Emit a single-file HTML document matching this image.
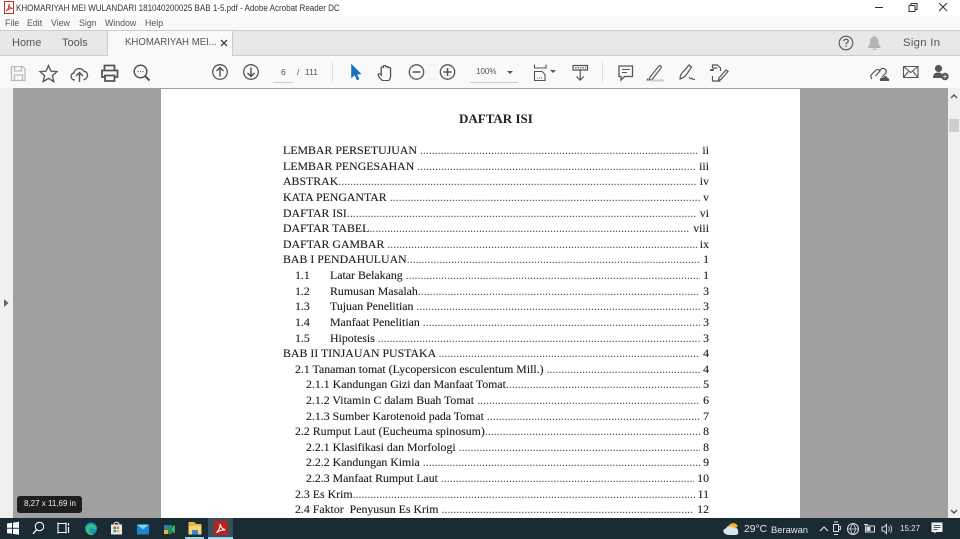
<!DOCTYPE html>
<html><head><meta charset="utf-8"><style>
*{box-sizing:border-box}
html,body{margin:0;padding:0;width:960px;height:539px;overflow:hidden;background:#fff;font-family:"Liberation Sans",sans-serif}
.a{position:absolute}
.t{position:absolute;white-space:nowrap;color:#444}
.l{position:absolute;left:283px;width:426px;height:16px;display:flex;font:11.85px/16px "Liberation Serif",serif;color:#1c1c1c;white-space:pre;filter:blur(.25px);-webkit-text-stroke:.12px #222}
.l b{font-weight:normal}
.l i{font-style:normal;flex:1;overflow:hidden;margin:0 3px 0 0;color:#444;-webkit-text-stroke:0}
.l u{text-decoration:none;display:inline-block;width:35px}
svg{position:absolute;overflow:visible}
</style></head><body>
<div class="a" style="left:0;top:0;width:960px;height:16px;background:#fff"></div>
<div class="a" style="left:0;top:16px;width:960px;height:14px;background:#f9f9f9"></div>
<div class="a" style="left:0;top:30px;width:960px;height:26px;background:#e8e8e8;border-top:1px solid #ccc;border-bottom:1px solid #ccc"></div>
<div class="a" style="left:107px;top:30px;width:126px;height:27px;background:#f9f9f9;border-right:1px solid #ccc;border-left:1px solid #ccc;border-top:1px solid #ccc"></div>
<div class="a" style="left:0;top:56px;width:960px;height:32px;background:#f9f9f9"></div>

<svg style="left:3px;top:1px" width="12" height="13" viewBox="0 0 12 13"><path d="M1.5 .5h9v12h-9z" fill="#fff" stroke="#c8302c"/><path d="M3 10c2-1 3-4 3-7 0 3 1 4 3.500 4.500C7 7.500 4.500 8.500 3 10z" fill="none" stroke="#c8302c"/></svg>
<div class="t" style="left:16px;top:2px;font-size:9px;line-height:12px;color:#333;transform:scaleX(.893);transform-origin:left">KHOMARIYAH MEI WULANDARI 181040200025 BAB 1-5.pdf - Adobe Acrobat Reader DC</div>
<div class="t" style="left:5px;top:17px;font-size:8.800px;line-height:12px;color:#555">File</div>
<div class="t" style="left:27px;top:17px;font-size:8.800px;line-height:12px;color:#555">Edit</div>
<div class="t" style="left:51px;top:17px;font-size:8.800px;line-height:12px;color:#555">View</div>
<div class="t" style="left:79px;top:17px;font-size:8.800px;line-height:12px;color:#555">Sign</div>
<div class="t" style="left:105px;top:17px;font-size:8.800px;line-height:12px;color:#555">Window</div>
<div class="t" style="left:145px;top:17px;font-size:8.800px;line-height:12px;color:#555">Help</div>

<svg style="left:875px;top:3px" width="75" height="10" fill="none" stroke="#333"><path d="M0 4.500h8"/><path d="M34 2.500h6v6h-6zM36 2.500v-2h6v6h-2" stroke-width="1"/><path d="M64 0l8 8M72 0l-8 8"/></svg>

<div class="t" style="left:12px;top:36px;font-size:11px;line-height:14px;color:#555">Home</div>
<div class="t" style="left:62px;top:36px;font-size:11px;line-height:14px;color:#555">Tools</div>
<div class="t" style="left:125px;top:36px;font-size:10.300px;line-height:14px;color:#555;transform:scaleX(.935);transform-origin:left">KHOMARIYAH MEI...</div>
<svg style="left:221px;top:40px" width="6" height="6" stroke="#444" stroke-width="1.400"><path d="M0 0l6 6M6 0l-6 6"/></svg>

<svg style="left:838px;top:35px" width="16" height="16" fill="none" stroke="#555"><circle cx="8" cy="8" r="6.800" stroke-width="1.100"/><path d="M5.800 6.200c.2-2.700 4.400-2.700 4.400 0 0 1.600-2.200 1.500-2.200 3.200" stroke-width="1.200"/><path d="M8 10.600v1.300" stroke-width="1.200"/></svg>
<svg style="left:868px;top:36px" width="13" height="14" fill="#b4b4b4"><path d="M6.500 0c1 0 1.200.6 1.200 1C10 1.800 10.500 4 10.500 6c0 2.500 1 3.500 2 4.500V12H0v-1.500c1-1 2-2 2-4.500 0-2 .5-4.200 2.800-5 0-.4.700-1 1.700-1z"/><path d="M5 12.500h3V14H5z"/></svg>
<div class="t" style="left:903px;top:36px;font-size:11.300px;line-height:14px;font-weight:500;color:#555;letter-spacing:.3px">Sign In</div>

<svg style="left:0;top:56px" width="960" height="32" fill="none" stroke="#555" stroke-width="1.300">
<g stroke="#bbb"><path d="M11.500 10.500h11l2.500 2.500v11.500h-13.500z"/><path d="M14.500 10.500v4.500h7v-4.500M14.500 24.500v-5.500h8v5.500"/></g>
<path d="M48.500 9.500l2.400 5.600 6.100.5-4.600 4 1.400 6-5.300-3.200-5.300 3.200 1.400-6-4.600-4 6.100-.5z"/>
<path d="M75 24c-5 0-5-6.500-1-7 .5-5 8-6 10-1.500 4-.5 5.500 6.500-.5 8.500M79.500 26v-9M76 20l3.500-3.500 3.500 3.500" stroke-width="1.400"/>
<g stroke="#555" stroke-width="1.800"><path d="M104.500 14.500v-5h10v5M104.500 21h-2.500v-6.500h15.500V21h-2.500"/><path d="M105 19.500h9.500v5.500H105z"/></g>
<circle cx="140.500" cy="15.500" r="6.300" stroke-width="1.500"/><path d="M145 20l4.500 4.500" stroke-width="2"/><path d="M137.500 15.500h1M140 15.500h1M142.500 15.500h1"/>
<circle cx="220" cy="16" r="7.300"/><path d="M220 20.500v-9M216.500 15l3.500-3.500 3.500 3.500" stroke-width="1.500"/>
<circle cx="251" cy="16" r="7.300"/><path d="M251 11.500v9M247.500 17l3.500 3.500 3.500-3.500" stroke-width="1.500"/>
<path d="M273 26.500h20" stroke="#ccc" stroke-width="1"/>
<path d="M332.500 6v20M602.500 6v20" stroke="#ddd" stroke-width="1"/>
<path d="M351.500 8.500l9.500 9.500h-4l2 5-2 1-2-5.200-3.500 2.700z" fill="#1b6fc2" stroke="#1b6fc2" stroke-width=".6"/>
<path transform="matrix(1.2 0 0 1 -76 0)" d="M382 24.500c-2-2-3.500-4.500-3.500-6 0-1 1.500-1 2.500.5v-7c0-1.400 1.800-1.400 1.800 0v-1.500c0-1.400 2-1.400 2 0v1c0-1.400 2-1.400 2 0v1c0-1.400 2-1.400 2 0v8c0 2-1 3-1.500 4z" stroke-width="1.100"/>
<circle cx="416.500" cy="16" r="7.200"/><path d="M412.500 16h8" stroke-width="1.500"/>
<circle cx="447.500" cy="16" r="7.200"/><path d="M443.500 16h8M447.500 12v8" stroke-width="1.500"/>
<path d="M470 26.500h48" stroke="#ccc" stroke-width="1"/>
<path d="M534.500 8.500v3.500h11.500v-3.500" stroke-width="1.100"/><path d="M534.500 25v-9.500h7.500l3 3v6.500M534.500 24.500h11" stroke-width="1.100"/><path d="M537 22h6" stroke-dasharray="1 1" stroke-width="1"/>
<path d="M573 9.500h14.500v4.500H573zM580.200 14v10M576.500 20.500l3.700 3.700 3.700-3.700" stroke-width="1.200"/><path d="M575 11.800h11" stroke-dasharray="1.500 1" stroke-width="1.100"/>
<path d="M619 10h13.500v10.500h-8L621 24v-3.500h-2z" stroke-width="1.300"/><path d="M622 13.500h8M622 16.500h5" stroke-width="1"/>
<path d="M650 21l9-11c1-1 3 .5 2 2l-8.500 11-3.500 1z" stroke-width="1.100"/><path d="M648 22.500l-1 2" stroke-width="1.200"/><path d="M650 24.500h14" stroke="#ccc" stroke-width="2"/>
<path d="M680 23c0-4 2-7 4-8l5-6 2.500 2-4 6c-1 2-4 5-7.500 6z" stroke-width="1.200"/><path d="M689 21c2 2 1 3 3 1 1 2 1 2 3 1" stroke-width="1"/>
<path d="M712.500 12v-3h5l3 3v3M712.500 12h5M712.500 20v5h8" stroke-width="1.200"/><path d="M719 22l7-8 2 1.500-7 8-2.500.8z" stroke-width="1.200"/><path d="M710 14h4" stroke-width="1.800"/>
<path d="M872 23c-2-2-1-4 0-5l4-4c2-1 3.500 0 4 1l-4.500 5M880 14c2-2 4-2 5.500-.5 1 1.500 1 3-.5 4.500l-3 3" stroke-width="1.200"/><path d="M880 25c-1-3 2-4 3-3 1-3 4-2 4.500 0 1.500 0 2 1.500 1.500 3z" fill="#555" stroke="none"/>
<path d="M903.500 10.500h14.500v11h-14.500zM903.500 10.500l7.250 6 7.250-6M903.500 21.500l5-6M918 21.500l-5-6" stroke-width="1.100"/>
<circle cx="938.500" cy="12.500" r="3.600" fill="#555" stroke="none"/><path d="M933 22c0-4 2-5.500 5.500-5.500S942 18 942 22z" fill="#555" stroke="none"/><circle cx="945" cy="20.500" r="3.700" fill="#555" stroke="none"/><path d="M943 20.500h4M945 18.500v4" stroke="#eee" stroke-width=".8"/>
</svg>

<div class="t" style="left:281px;top:66px;font-size:8.500px;line-height:12px;color:#555">6</div>
<div class="t" style="left:297px;top:66px;font-size:8.500px;line-height:12px;color:#555">/</div>
<div class="t" style="left:305px;top:66px;font-size:8.500px;line-height:12px;color:#555">111</div>
<div class="t" style="left:476px;top:66px;font-size:8px;line-height:12px;color:#555">100%</div>
<svg style="left:507px;top:71px" width="6" height="4" fill="#555"><path d="M0 0h6L3 3z"/></svg>
<svg style="left:550px;top:70px" width="6" height="4" fill="#555"><path d="M0 0h6L3 3z"/></svg>

<!-- document area -->
<div class="a" style="left:0;top:88px;width:13px;height:430px;background:#f0f0f0"></div>
<svg style="left:4px;top:299px" width="5" height="8" fill="#666"><path d="M0 0l4.500 4L0 8z"/></svg>
<div class="a" style="left:13px;top:88px;width:935px;height:430px;background:#a0a0a0"></div>
<div class="a" style="left:161px;top:89px;width:639px;height:429px;background:#fff"></div>
<div class="a" style="left:948px;top:88px;width:12px;height:430px;background:#f0f0f0"></div>
<div class="a" style="left:949px;top:119px;width:10px;height:13px;background:#cdcdcd"></div>
<svg style="left:951px;top:94px" width="6" height="4" fill="none" stroke="#555" stroke-width="1.400"><path d="M0 4l3-3 3 3"/></svg>
<svg style="left:951px;top:510px" width="6" height="4" fill="none" stroke="#555" stroke-width="1.400"><path d="M0 0l3 3 3-3"/></svg>

<div class="t" style="left:459px;top:111px;font:bold 13px/16px 'Liberation Serif',serif;color:#222">DAFTAR ISI</div>

<div class="l" style="top:142px"><b>LEMBAR PERSETUJUAN </b><i>............................................................................................................................</i><b>ii</b></div>
<div class="l" style="top:157.600px"><b>LEMBAR PENGESAHAN </b><i>............................................................................................................................</i><b>iii</b></div>
<div class="l" style="top:173.200px"><b>ABSTRAK</b><i>....................................................................................................................................</i><b>iv</b></div>
<div class="l" style="top:188.900px"><b>KATA PENGANTAR </b><i>............................................................................................................................</i><b>v</b></div>
<div class="l" style="top:204.500px"><b>DAFTAR ISI</b><i>....................................................................................................................................</i><b>vi</b></div>
<div class="l" style="top:220.100px"><b>DAFTAR TABEL</b><i>....................................................................................................................................</i><b>viii</b></div>
<div class="l" style="top:235.700px"><b>DAFTAR GAMBAR </b><i>............................................................................................................................</i><b>ix</b></div>
<div class="l" style="top:251.300px"><b>BAB I PENDAHULUAN</b><i>....................................................................................................................................</i><b>1</b></div>
<div class="l" style="top:267px;left:295px;width:414px"><b><u>1.1</u>Latar Belakang </b><i>....................................................................................................................................</i><b>1</b></div>
<div class="l" style="top:282.600px;left:295px;width:414px"><b><u>1.2</u>Rumusan Masalah</b><i>....................................................................................................................................</i><b>3</b></div>
<div class="l" style="top:298.200px;left:295px;width:414px"><b><u>1.3</u>Tujuan Penelitian </b><i>....................................................................................................................................</i><b>3</b></div>
<div class="l" style="top:313.800px;left:295px;width:414px"><b><u>1.4</u>Manfaat Penelitian </b><i>....................................................................................................................................</i><b>3</b></div>
<div class="l" style="top:329.500px;left:295px;width:414px"><b><u>1.5</u>Hipotesis </b><i>....................................................................................................................................</i><b>3</b></div>
<div class="l" style="top:345.100px"><b>BAB II TINJAUAN PUSTAKA </b><i>....................................................................................................................................</i><b>4</b></div>
<div class="l" style="top:360.700px;left:295px;width:414px"><b>2.1 Tanaman tomat (Lycopersicon esculentum Mill.) </b><i>....................................................................................................................................</i><b>4</b></div>
<div class="l" style="top:376.300px;left:306px;width:403px"><b>2.1.1 Kandungan Gizi dan Manfaat Tomat</b><i>....................................................................................................................................</i><b>5</b></div>
<div class="l" style="top:391.900px;left:306px;width:403px"><b>2.1.2 Vitamin C dalam Buah Tomat </b><i>....................................................................................................................................</i><b>6</b></div>
<div class="l" style="top:407.600px;left:306px;width:403px"><b>2.1.3 Sumber Karotenoid pada Tomat </b><i>....................................................................................................................................</i><b>7</b></div>
<div class="l" style="top:423.200px;left:295px;width:414px"><b>2.2 Rumput Laut (Eucheuma spinosum)</b><i>....................................................................................................................................</i><b>8</b></div>
<div class="l" style="top:438.800px;left:306px;width:403px"><b>2.2.1 Klasifikasi dan Morfologi </b><i>....................................................................................................................................</i><b>8</b></div>
<div class="l" style="top:454.400px;left:306px;width:403px"><b>2.2.2 Kandungan Kimia </b><i>....................................................................................................................................</i><b>9</b></div>
<div class="l" style="top:470px;left:306px;width:403px"><b>2.2.3 Manfaat Rumput Laut </b><i>....................................................................................................................................</i><b>10</b></div>
<div class="l" style="top:485.700px;left:295px;width:414px"><b>2.3 Es Krim</b><i>....................................................................................................................................</i><b>11</b></div>
<div class="l" style="top:501.300px;left:295px;width:414px"><b>2.4 Faktor  Penyusun Es Krim </b><i>....................................................................................................................................</i><b>12</b></div>

<div class="a" style="left:17px;top:496px;width:65px;height:17px;background:#1e1e1e;border-radius:3px"></div>
<div class="t" style="left:24px;top:498px;font-size:8px;line-height:12px;color:#eee">8,27 x 11,69 in</div>

<!-- taskbar -->
<div class="a" style="left:0;top:518px;width:960px;height:21px;background:#1a2b34"></div>
<div class="a" style="left:208px;top:518px;width:25px;height:21px;background:#3d4d56"></div>
<div class="a" style="left:185px;top:537px;width:19px;height:2px;background:#9ad0f0"></div>
<div class="a" style="left:208px;top:537px;width:25px;height:2px;background:#9ad0f0"></div>
<svg style="left:0;top:518px" width="960" height="21" fill="none">
<path d="M7 5.500l5-.7v5H7zM13 4.700l6-.9v6h-6zM7 10.800h5v5l-5-.7zM13 10.800h6v6l-6-.9z" fill="#fff"/>
<circle cx="39.500" cy="8.500" r="4.200" stroke="#fff" stroke-width="1.100"/><path d="M36.500 11.800l-3.500 4" stroke="#fff" stroke-width="1.300"/>
<path d="M58 5.500h8v9h-8zM58 5.500v-1M66 4.500v1M58 14.500v1M66 14.500v1" stroke="#fff" stroke-width="1.100"/><path d="M68.500 5v2.500M68.500 9v6" stroke="#fff" stroke-width="1.200"/>
<circle cx="91" cy="10.500" r="6" fill="#1b8fc8"/><path d="M86 10c1-4 8-5 10.500-.5.500 2-3 2.500-4 1.500 0-2-3-2-3 1 0 3 3 4.500 5 4-3 2.500-9 1-8.500-6z" fill="#35c27c"/>
<path d="M111 6.500h11v10h-11z" fill="#e8e8e8"/><path d="M114 6.500c0-3 5-3 5 0" stroke="#e8e8e8"/><path d="M113.500 8.500h2.500v2.500h-2.500z" fill="#e0452b"/><path d="M116.800 8.500h2.500v2.500h-2.500z" fill="#7db93b"/><path d="M113.500 11.800h2.500v2.500h-2.500z" fill="#2c9be0"/><path d="M116.800 11.800h2.500v2.500h-2.500z" fill="#f2b81c"/>
<path d="M137 6.500h12v10h-12z" fill="#1b86d0"/><path d="M137 6.500l6 5 6-5z" fill="#7fd0f5"/>
<path d="M164 7h8v9h-8z" fill="#2b8a5a"/><path d="M164 7h4v4h-4z" fill="#2e7ed0"/><path d="M164 12h4v4h-4z" fill="#e6b52c"/><path d="M172 9l3-2v8.500l-3-2z" fill="#3ab36b"/>
<path d="M188.500 4h6l1.500 2h5.500v10.500h-13z" fill="#e8b93c"/><path d="M188.500 8h13v8.500h-13z" fill="#f4d576"/><path d="M192 12h6v4.500h-6z" fill="#3b87c4"/>
<rect x="214.500" y="3" width="13" height="14" fill="#c1201b"/><path d="M216.500 14.500c2.500-2 3.500-5 3.800-8.500.2 3 1.500 5 5 5.800-3.500 0-6.500 1-8.800 2.700z" stroke="#fff" stroke-width="1.100"/>
<path d="M730 17c-8 0-8-6-4-6.500 1-3 5-4 7-2 3 0 5.500 3 5 5 1 2-1 3.500-2 3.500z" fill="#dbe6f0"/><path d="M728 9a5.500 5.500 0 0 1 10-1c-1.500 1-2 2-2.500 3-1.500-1.500-4-3-7.500-2z" fill="#f5b324"/>
<path d="M820 13l4-4 4 4" stroke="#eee" stroke-width="1"/>
<rect x="833.500" y="6.500" width="5" height="7" stroke="#ddd"/><path d="M834 4h4M834 16.500h4M838.500 8.500h2v3h-2" stroke="#ddd" stroke-width=".9"/>
<circle cx="853" cy="11" r="5.500" stroke="#ddd"/><path d="M847.500 11h11M853 5.500c-3 3.500-3 7.500 0 11M853 5.500c3 3.500 3 7.500 0 11" stroke="#ddd" stroke-width=".8"/>
<path d="M865.500 8h9v6h-9z" stroke="#ddd"/><path d="M866.500 9h4v4h-4z" fill="#ddd"/><path d="M864 6.500h4" stroke="#ddd"/>
<path d="M882 9h2l2.500-2.500v9L884 13h-2z" stroke="#ddd"/><path d="M888.500 8.500c1 1.500 1 3.500 0 5M890.500 7c1.500 2.500 1.500 5.500 0 8" stroke="#ddd" stroke-width=".8"/>
<path d="M931.500 4.500h11v9.500h-6.500l-1.500 2v-2h-3z" fill="#f2f2f2"/><path d="M933.500 7.500h7M933.500 9.500h7M933.500 11.500h4" stroke="#1a2b34" stroke-width=".8"/>
</svg>
<div class="t" style="left:744px;top:523px;font-size:10.300px;line-height:13px;color:#e8e8e8">29°C</div>
<div class="t" style="left:771px;top:523px;font-size:9.400px;line-height:13px;color:#e8e8e8">Berawan</div>
<div class="t" style="left:900px;top:522px;font-size:8px;line-height:13px;color:#e8e8e8">15:27</div>
</body></html>
